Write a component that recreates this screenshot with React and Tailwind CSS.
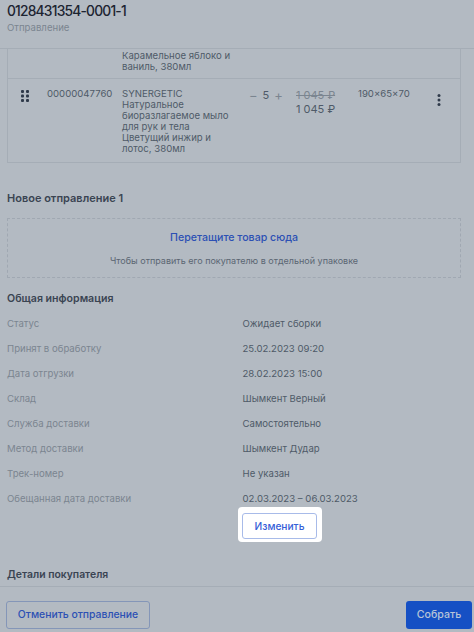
import React from 'react';

const infoRows = [
  ['Статус', 'Ожидает сборки'],
  ['Принят в обработку', '25.02.2023 09:20'],
  ['Дата отгрузки', '28.02.2023 15:00'],
  ['Склад', 'Шымкент Верный'],
  ['Служба доставки', 'Самостоятельно'],
  ['Метод доставки', 'Шымкент Дудар'],
  ['Трек-номер', 'Не указан'],
  ['Обещанная дата доставки', '02.03.2023 – 06.03.2023'],
];

function DragHandle() {
  return (
    <svg width="8" height="12" viewBox="0 0 8 12" fill="#2f3a4a">
      <rect x="0" y="0" width="3" height="3" rx="1" />
      <rect x="5" y="0" width="3" height="3" rx="1" />
      <rect x="0" y="4.5" width="3" height="3" rx="1" />
      <rect x="5" y="4.5" width="3" height="3" rx="1" />
      <rect x="0" y="9" width="3" height="3" rx="1" />
      <rect x="5" y="9" width="3" height="3" rx="1" />
    </svg>
  );
}

function MoreDots() {
  return (
    <svg width="4" height="12" viewBox="0 0 4 12" fill="#2f3a4a">
      <circle cx="2" cy="1.5" r="1.5" />
      <circle cx="2" cy="6" r="1.5" />
      <circle cx="2" cy="10.5" r="1.5" />
    </svg>
  );
}

export default function App() {
  return (
    <div className="h-[632px] w-[474px] overflow-hidden flex flex-col bg-[#b3bac2] font-['Inter',sans-serif] text-[#4f5a68]">
      {/* шапка */}
      <div className="h-[49px] shrink-0 border-b border-[#a5adb6] pl-[7px] pt-[1px]">
        <div className="text-[13.8px] leading-[20px] font-medium text-[#1c2431] tracking-[-0.8px]">0128431354-0001-1</div>
        <div className="text-[9.6px] leading-[13px] text-[#7b8590]">Отправление</div>
      </div>

      {/* контент */}
      <div className="flex-1 min-h-0 overflow-hidden pl-[7px] pr-[13px]">
        <div className="border border-t-0 border-[#a5adb6]">
          <div className="h-[30px] border-b border-[#a5adb6] pl-[114px] text-[9.6px] leading-[11.2px] pt-[1px]">
            <div>Карамельное яблоко и</div>
            <div>ваниль, 380мл</div>
          </div>
          <div className="h-[83px] flex text-[9.6px] leading-[11px] pt-[9px]">
            <div className="w-[39px] pl-[13px] pt-[2px]"><DragHandle /></div>
            <div className="w-[75px]">00000047760</div>
            <div className="w-[127px]">
              SYNERGETIC<br />Натуральное<br />биоразлагаемое мыло<br />для рук и тела<br />Цветущий инжир и<br />лотос, 380мл
            </div>
            <div className="w-[47px] flex gap-[5px] items-start text-[11px] leading-[14px]">
              <span className="text-[13px] text-[#7b8590]">−</span><span>5</span><span className="text-[13px] text-[#7b8590]">+</span>
            </div>
            <div className="w-[62px] text-[11px] leading-[14px]">
              <div className="line-through text-[#7b8590]">1 045 ₽</div>
              <div>1 045 ₽</div>
            </div>
            <div className="w-[79px]">190×65×70</div>
            <div className="pt-[6px]"><MoreDots /></div>
          </div>
        </div>

        <div className="mt-[28px] text-[11px] leading-[15px] font-semibold text-[#3a4452]">Новое отправление 1</div>

        <div className="mt-[12px] h-[60px] border border-dashed border-[#a0a8b2] flex flex-col items-center pt-[11px]">
          <div className="text-[10.6px] leading-[15px] font-medium text-[#2c50b4]">Перетащите товар сюда</div>
          <div className="mt-[10px] text-[9px] leading-[12px] text-[#5b6673]">Чтобы отправить его покупателю в отдельной упаковке</div>
        </div>

        <div className="mt-[13px] text-[10.6px] leading-[15px] font-semibold text-[#3a4452]">Общая информация</div>

        <div className="mt-[10px] flex flex-col gap-[10px] text-[9.6px] leading-[15px]">
          {infoRows.map(([label, value]) => (
            <div key={label} className="flex">
              <div className="w-[235.5px] text-[#7b8590]">{label}</div>
              <div>{value}</div>
            </div>
          ))}
        </div>

        <div className="mt-[1px] ml-[230.5px] w-[84px] h-[35px] bg-white rounded-[4px] p-[4.5px]">
          <button className="w-full h-full bg-white border border-[#a8bbe9] rounded-[3px] text-[10.2px] font-medium text-[#3560d8]">Изменить</button>
        </div>

        <div className="mt-[25px] text-[10.4px] leading-[15px] font-semibold text-[#3a4452]">Детали покупателя</div>
      </div>

      {/* футер */}
      <div className="h-[46px] shrink-0 border-t border-[#a5adb6] flex items-start justify-between pl-[6px] pr-[2px] pt-[14px]">
        <button className="w-[144px] h-[28px] border border-[#8496b8] rounded-[3px] text-[10.4px] font-medium text-[#2c50b4]">Отменить отправление</button>
        <button className="w-[66px] h-[28px] bg-[#1650c4] rounded-[3px] text-[10.6px] font-medium text-[#b8c4d8]">Собрать</button>
      </div>
    </div>
  );
}
